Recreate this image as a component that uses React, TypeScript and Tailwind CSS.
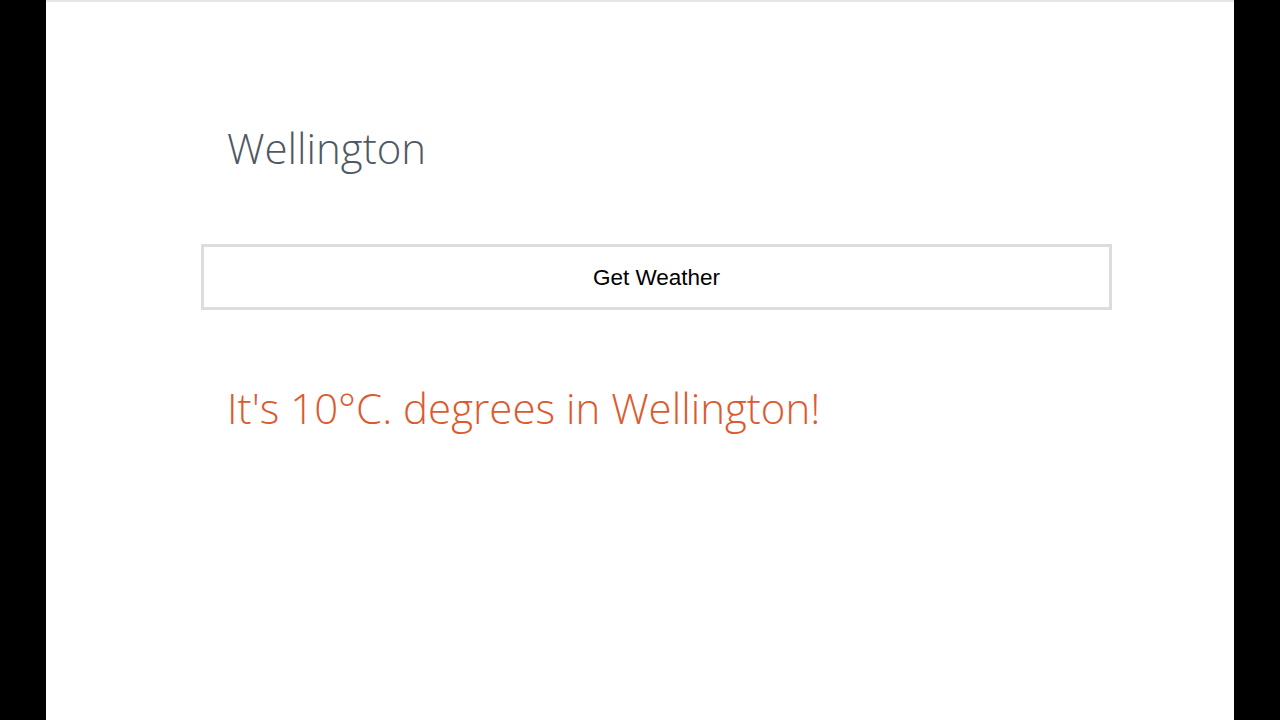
export default function App() {
  return (
    <div className="flex h-[720px] w-[1280px] bg-black">
      <div className="ml-[46px] flex h-full w-[1188px] flex-col bg-white border-t-2 border-[#e6e6e6]">
        <div className="ml-[155px] mt-[116px] w-[911px]" >
          <h1
            className="pl-[26px] text-[42px] font-light leading-[60px] text-[#4f5863]"
            style={{ fontFamily: '"Open Sans", sans-serif' }}
          >
            Wellington
          </h1>
          <button
            className="mt-[66px] flex h-[66px] w-full items-center justify-center border-[3px] border-[#dddddd] bg-white pt-[2px] text-[22.5px] text-black"
            style={{ fontFamily: '"Liberation Sans", Arial, sans-serif' }}
          >
            Get Weather
          </button>
          <p
            className="mt-[68px] pl-[26px] text-[42px] font-light leading-[60px] text-[#dc5a2f]"
            style={{ fontFamily: '"Open Sans", sans-serif' }}
          >
            It's 10°C. degrees in Wellington!
          </p>
        </div>
      </div>
    </div>
  );
}
